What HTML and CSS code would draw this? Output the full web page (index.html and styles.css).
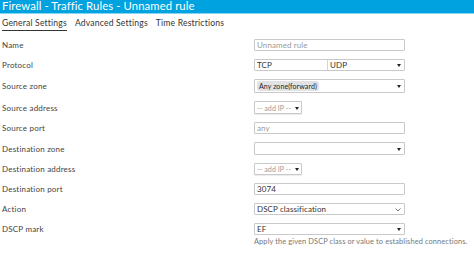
FILE: index.html
```html
<!DOCTYPE html>
<html>
<head>
<meta charset="utf-8">
<link rel="stylesheet" href="styles.css">
</head>
<body>
<div class="header">Firewall - Traffic Rules - Unnamed rule</div>
<div class="tabs">
  <span class="tab active">General Settings</span>
  <span class="tab">Advanced Settings</span>
  <span class="tab">Time Restrictions</span>
</div>
<div class="form">
  <div class="row h12"><div class="label">Name</div><div class="field input placeholder">Unnamed rule</div></div>
  <div class="row h12"><div class="label">Protocol</div>
    <div class="field multi">
      <span class="part p1">TCP</span><span class="part p2">UDP</span><span class="tri"></span>
    </div>
  </div>
  <div class="row h14"><div class="label">Source zone</div>
    <div class="field select zone"><span class="pill">Any zone(forward)</span><span class="tri"></span></div>
  </div>
  <div class="row h13"><div class="label">Source address</div>
    <div class="field small placeholder">-- add IP --<span class="tri"></span></div>
  </div>
  <div class="row h12"><div class="label">Source port</div><div class="field input placeholder">any</div></div>
  <div class="row h13"><div class="label">Destination zone</div>
    <div class="field select"><span class="tri"></span></div>
  </div>
  <div class="row h12"><div class="label">Destination address</div>
    <div class="field small placeholder">-- add IP --<span class="tri"></span></div>
  </div>
  <div class="row h12"><div class="label">Destination port</div><div class="field input">3074</div></div>
  <div class="row h12"><div class="label">Action</div>
    <div class="field select plain">DSCP classification<svg class="chev" width="6" height="4" viewBox="0 0 6 4"><path d="M0.5 0.5 L3 3 L5.5 0.5" fill="none" stroke="#777" stroke-width="1"/></svg></div>
  </div>
  <div class="row h12"><div class="label">DSCP mark</div>
    <div class="field select">EF<span class="tri"></span></div>
  </div>
  <div class="help">Apply the given DSCP class or value to established connections.</div>
</div>
</body>
</html>
```

FILE: styles.css
```css
html, body {
  margin: 0;
  padding: 0;
  background: #fff;
  font-family: "Lato", "Open Sans", sans-serif;
  color: #3a3a3a;
}
.header {
  height: 13px;
  background: #00a2e0;
  border-bottom: 1px solid #86d3f2;
  color: #fff;
  font-size: 11.3px;
  line-height: 12px;
  padding-left: 2px;
  overflow: hidden;
  letter-spacing: 0.1px;
}
.tabs {
  display: flex;
  gap: 8px;
  padding: 4px 0 0 2px;
  height: 13px;
  font-size: 8.6px;
  line-height: 10px;
  letter-spacing: 0.18px;
  color: #333;
}
.tab {
  padding-bottom: 2px;
}
.tab.active {
  border-bottom: 1px solid #333;
}
.form {
  padding: 8px 0 0 2px;
  display: flex;
  flex-direction: column;
  gap: 8px;
  font-size: 8px;
}
.row {
  display: flex;
  align-items: center;
}
.row.h12 { height: 12px; }
.row.h13 { height: 13px; }
.row.h14 { height: 14px; }
.label {
  width: 252px;
  color: #444;
  font-size: 8px;
  letter-spacing: 0.2px;
}
.field {
  box-sizing: border-box;
  height: 100%;
  width: 151px;
  border: 1px solid #c9c9c9;
  border-radius: 1px;
  display: flex;
  align-items: center;
  padding-left: 2px;
  font-size: 8px;
  letter-spacing: 0.1px;
  color: #333;
  position: relative;
  background: #fff;
}
.placeholder { color: #999; }
.multi {
  padding-left: 0;
}
.part {
  height: 100%;
  display: flex;
  align-items: center;
  padding-left: 2px;
}
.p1 {
  width: 70px;
  border-right: 1px solid #d5d5d5;
}
.tri {
  position: absolute;
  right: 3px;
  top: 50%;
  margin-top: -1px;
  width: 0;
  height: 0;
  border-left: 2px solid transparent;
  border-right: 2px solid transparent;
  border-top: 3px solid #222;
}
.zone {
  padding-left: 2px;
}
.pill {
  background: #e2e2e2;
  border-radius: 3px;
  padding: 1px 2px;
  font-size: 7px;
  color: #222;
  line-height: 8px;
}
.small {
  width: 48px;
  font-size: 7px;
  box-shadow: 0 1px 1px rgba(0,0,0,0.08);
}
.small .tri { right: 2px; }
.chev {
  position: absolute;
  right: 3px;
  top: 4px;
}
.help {
  margin-left: 252px;
  margin-top: -6px;
  font-size: 7.4px;
  letter-spacing: 0.12px;
  color: #777;
}
```
